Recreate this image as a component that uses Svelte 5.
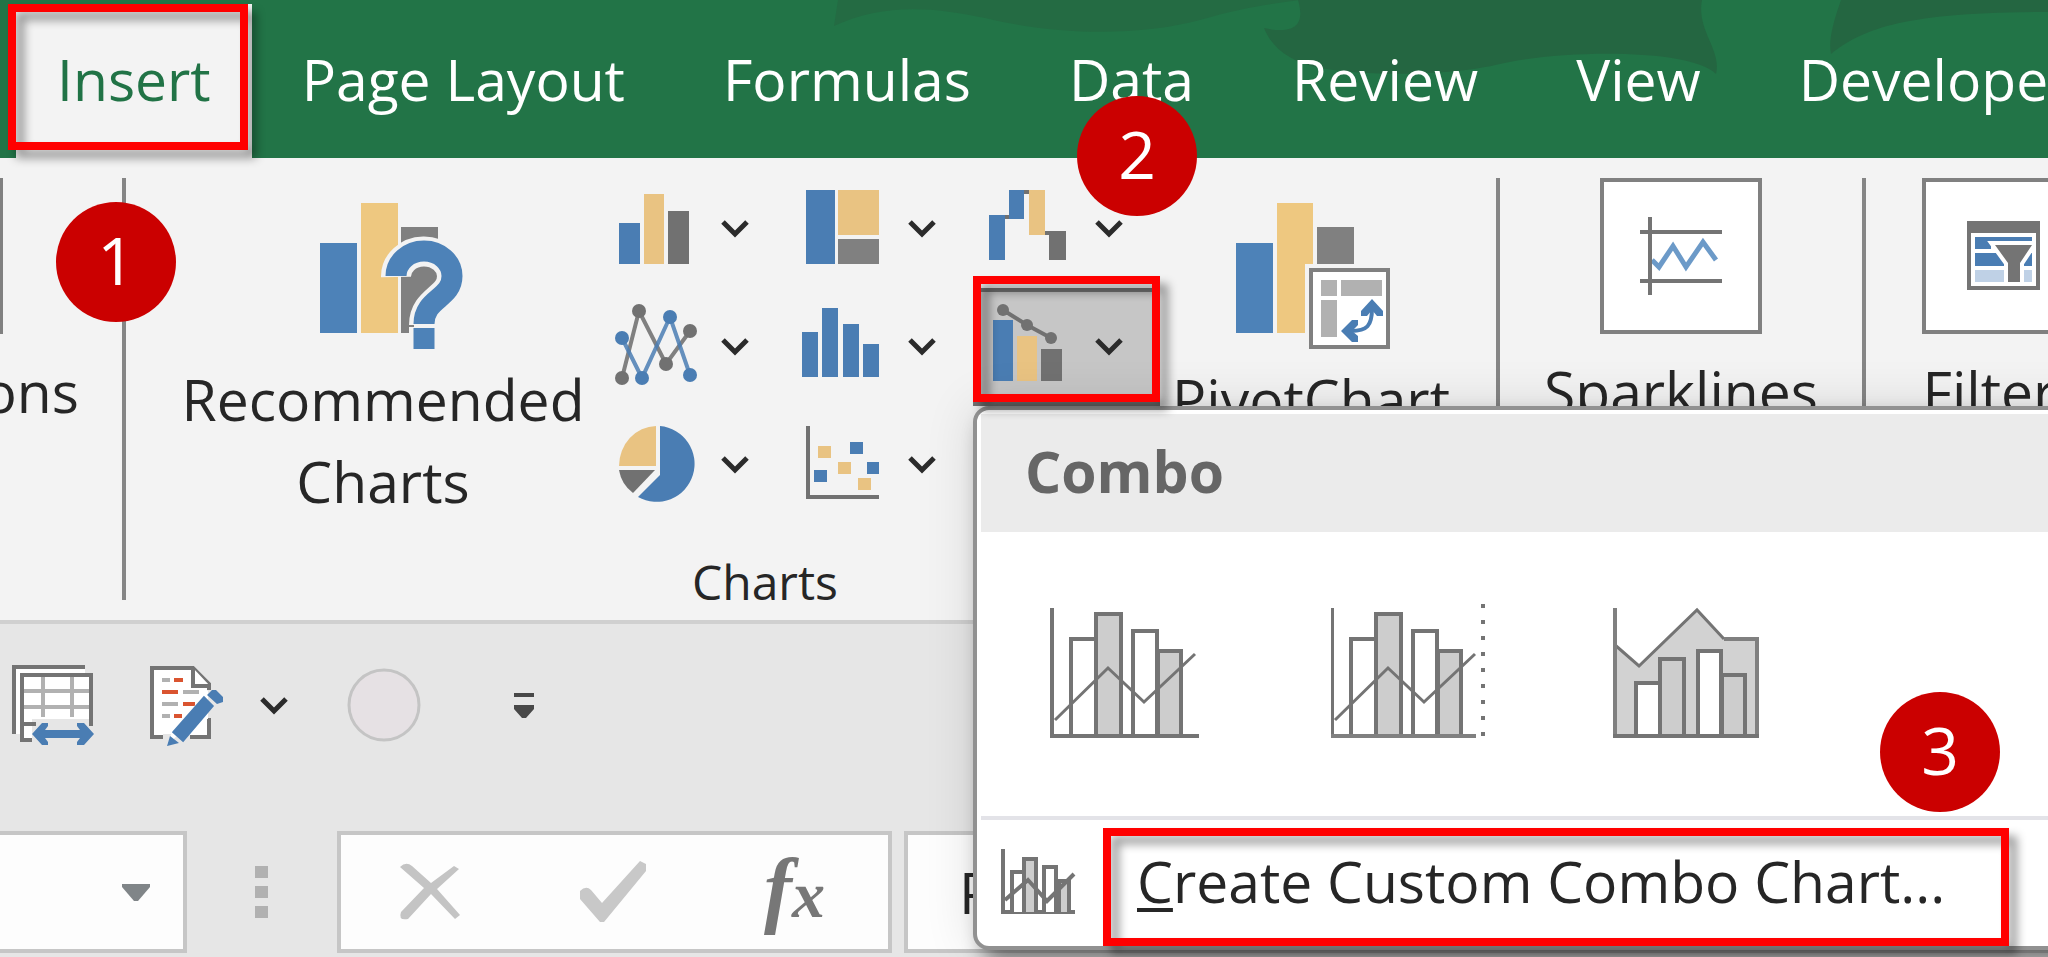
<script lang="ts">
  const tabs = ['Insert', 'Page Layout', 'Formulas', 'Data', 'Review', 'View', 'Developer'];
  const charts = ['column', 'treemap', 'waterfall', 'line', 'histogram', 'combo', 'pie', 'scatter'];

  let active = $state('Insert');
  let open = $state(true);
  let nameBox = $state('');
  let formula = $state('P');
</script>

{#snippet chevron()}
  <svg class="chevron" width="32" height="22" viewBox="0 0 32 22"><path d="M4 4L16 16L28 4" fill="none" stroke="#2b2b2b" stroke-width="5" /></svg>
{/snippet}

{#snippet clustered()}
  <g fill="#fff" stroke="#747474" stroke-width="4">
    <path d="M3 4V132" />
    <path d="M22 132V35H47V132M84 132V27H108V132" />
    <path d="M47 132V10H72V132M109 132V47H132V132" fill="#cdcdcd" />
    <path d="M6 116L59 64L95 98L146 50" fill="none" stroke-width="3" />
  </g>
{/snippet}

{#snippet icon(name: string)}
  <svg width="82" height="86" viewBox="0 0 82 86">
    {#if name === 'column'}
      <path d="M4 37h21v41H4z" fill="#4a7db3" /><path d="M29 8h20v70H29z" fill="#e9c382" /><path d="M53 25h21v53H53z" fill="#717171" />
    {:else if name === 'treemap'}
      <path d="M4 4h29v74H4z" fill="#4a7db3" /><path d="M36 4h41v45H36z" fill="#e9c382" /><path d="M36 53h41v25H36z" fill="#808080" />
    {:else if name === 'waterfall'}
      <path d="M16 29h6v4h-6zM35 4h6v4h-6zM56 45h5v4h-5zM60 45h17v29H60z" fill="#717171" />
      <path d="M0 29h16v45H0zM20 4h15v29H20z" fill="#4a7db3" /><path d="M40 4h16v45H40z" fill="#e9c382" />
    {:else if name === 'line'}
      <path d="M7 74L24 7L51 60L75 27" fill="none" stroke="#808080" stroke-width="4" />
      <path d="M7 34L27 74L55 13L75 71" fill="none" stroke="#4a7db3" stroke-width="4" stroke-opacity=".85" />
      {#each [[7, 74], [24, 7], [51, 60], [75, 27]] as [x, y]}<circle cx={x} cy={y} r="7" fill="#717171" />{/each}
      {#each [[7, 34], [27, 74], [55, 13], [75, 71]] as [x, y]}<circle cx={x} cy={y} r="7" fill="#4a7db3" />{/each}
    {:else if name === 'histogram'}
      <path d="M0 28h16v45H0zM20 4h16v69H20zM41 20h16v53H41zM61 40h16v33H61z" fill="#4a7db3" />
    {:else if name === 'combo'}
      <path d="M4 16h20v61H4z" fill="#4a7db3" /><path d="M28 32h20v45H28z" fill="#e9c382" /><path d="M52 45h21v32H52z" fill="#717171" />
      <path d="M14 6L38 21L62 34" fill="none" stroke="#717171" stroke-width="4" />
      {#each [[14, 6], [38, 21], [62, 34]] as [x, y]}<circle cx={x} cy={y} r="6" fill="#717171" />{/each}
    {:else if name === 'pie'}
      <path d="M45 4A38 38 0 1 1 23 75L45 53Z" fill="#4a7db3" />
      <path d="M41 4V44H4A38 40 0 0 1 41 4Z" fill="#e9c382" />
      <path d="M4 48H40L18 71A36 36 0 0 1 4 48Z" fill="#717171" />
    {:else}
      <path d="M6 4V75H77" fill="none" stroke="#717171" stroke-width="4" />
      <path d="M16 24h13v12H16zM36 40h13v12H36zM56 56h13v12H56z" fill="#e9c382" />
      <path d="M48 20h13v12H48zM65 40h12v12H65zM12 48h13v12H12z" fill="#4a7db3" />
    {/if}
  </svg>
{/snippet}

<div class="app">
  <header>
    <svg class="swirl" viewBox="0 0 2048 158" preserveAspectRatio="none" aria-hidden="true">
      <path d="M838 0L834 26C880 4 930 6 985 18C1060 36 1140 36 1200 20C1240 8 1270 4 1300 0Z" fill="#246b43" />
      <path d="M1298 0C1304 20 1300 36 1264 28C1272 48 1290 62 1320 68C1380 78 1460 74 1500 64C1560 50 1690 48 1716 74C1722 50 1696 30 1702 0Z" fill="#246641" />
      <path d="M1841 0C1834 20 1828 40 1831 54C1862 30 1900 12 2048 12V0Z" fill="#246641" />
    </svg>
    <nav>
      {#each tabs as tab}
        <button class="tab" class:active={active === tab} onclick={() => (active = tab)}>
          {tab}
          {#if tab === 'Insert'}<span class="mark mark-tab"></span>{/if}
        </button>
      {/each}
    </nav>
  </header>

  <section class="ribbon">
    <div class="group group-left">
      <button class="big"><span class="tile"></span>Illustrations</button>
    </div>
    <span class="sep"></span>
    <div class="group group-charts">
      <div class="tools">
        <button class="big recommended">
          <svg width="160" height="160" viewBox="0 0 160 160">
            <path d="M17 53h37v90H17z" fill="#4d82b8" /><path d="M58 13h37v130H58z" fill="#eec880" /><path d="M98 37h37v106H98z" fill="#808080" />
            <path d="M93 87A28 25 0 0 1 149 86C149 109 121 109 121 135M121 137V160" fill="none" stroke="#f3f3f3" stroke-width="30" />
            <path d="M111 134h26v10h-26z" fill="#f3f3f3" />
            <path d="M93 86A28 25 0 0 1 149 86C149 109 121 108 121 134M121 138V159" fill="none" stroke="#4d82b8" stroke-width="21" />
          </svg>
          Recommended<br />Charts
        </button>
        <div class="chart-grid">
          {#each charts as name}
            <div class="cell">
              <button class="chart" class:pressed={name === 'combo' && open} aria-label={name} onclick={() => { if (name === 'combo') open = !open; }}>
                {@render icon(name)}
                {@render chevron()}
              </button>
              {#if name === 'combo'}
                {#if open}
                  <div class="menu">
                    <h2>Combo</h2>
                    <div class="gallery">
                      <button aria-label="Clustered column and line">
                        <svg width="160" height="136" viewBox="0 0 160 136">{@render clustered()}<path d="M1 132H150" stroke="#747474" stroke-width="4" /></svg>
                      </button>
                      <button aria-label="Line on secondary axis">
                        <svg width="160" height="136" viewBox="2 0 160 136">
                          {@render clustered()}
                          <path d="M1 132H147" stroke="#808080" stroke-width="4" />
                          <path d="M154 0V136" stroke="#747474" stroke-width="4" stroke-dasharray="4 12" />
                        </svg>
                      </button>
                      <button aria-label="Stacked area and column">
                        <svg width="160" height="136" viewBox="0 0 160 136">
                          <path d="M2 41L26 62L84 6L111 35H144V132H2Z" fill="#d2d2d2" />
                          <path d="M2 41L26 62L84 6L111 35" fill="none" stroke="#747474" stroke-width="3" />
                          <path d="M2 4V132H144V35H111" fill="none" stroke="#808080" stroke-width="4" />
                          <g stroke="#747474" stroke-width="4">
                            <path d="M23 132V79H47V132M85 132V47H108V132" fill="#fff" />
                            <path d="M47 132V55H71V132M109 132V71H132V132" fill="#cdcdcd" />
                            <path d="M0 132H146" />
                          </g>
                        </svg>
                      </button>
                    </div>
                    <button class="custom">
                      <svg width="76" height="68" viewBox="0 0 76 68">
                        <g fill="#fff" stroke="#747474" stroke-width="4">
                          <path d="M2 0V63H74" fill="none" />
                          <path d="M11 63V23H23V63M43 63V18H55V63" />
                          <path d="M23 63V10H35V63M58 63V32H68V63" fill="#cdcdcd" />
                          <path d="M4 51L27 31L46 52L73 25" fill="none" />
                        </g>
                      </svg>
                      <span class="custom-label"><u>C</u>reate Custom Combo Chart...<span class="mark"></span></span>
                    </button>
                  </div>
                {/if}
                <span class="mark mark-combo"></span>
              {/if}
            </div>
          {/each}
        </div>
        <button class="big pivot">
          <svg width="160" height="160" viewBox="0 0 160 160">
            <path d="M5 53h37v90H5z" fill="#4d82b8" /><path d="M46 13h36v130H46z" fill="#eec880" /><path d="M86 37h37v37H86z" fill="#808080" />
            <path d="M74 74h86v86H74z" fill="#f3f3f3" />
            <path d="M80 80h77v77H80z" fill="#fff" stroke="#808080" stroke-width="4" />
            <path d="M90 90h16v16H90zM110 90h41v16h-41zM90 110h16v37H90z" fill="#b1b1b1" />
            <path d="M141 118C141 136 136 141 120 141" fill="none" stroke="#4a7db3" stroke-width="4" />
            <path d="M141 109L152 121V126H146L141 120L136 126H130V121ZM110 141L121 130H127V135L121 141L127 146V152H121Z" fill="#4a7db3" />
          </svg>
          PivotChart
        </button>
      </div>
      <div class="group-name">Charts</div>
    </div>
    <span class="sep"></span>
    <div class="group group-spark">
      <button class="big">
        <span class="tile">
          <svg width="82" height="78" viewBox="0 0 82 78">
            <path d="M12 43L19 50L33 29L46 50L63 25L76 43" fill="none" stroke="#6c9ac8" stroke-width="5" />
            <path d="M10 0V78M0 15H82M0 64H82" stroke="#747474" stroke-width="4" />
          </svg>
        </span>
        Sparklines
      </button>
    </div>
    <span class="sep"></span>
    <div class="group group-filter">
      <button class="big">
        <span class="tile">
          <svg width="73" height="70" viewBox="0 0 73 70">
            <path d="M0 0h73v69H0z" fill="#747474" /><path d="M4 12h65v53H4z" fill="#fff" />
            <path d="M8 16h57v4H8zM8 16h16v12H8zM8 32h57v13H8z" fill="#4a7db3" /><path d="M8 49h57v12H8z" fill="#bfd1e6" />
            <path d="M28 24H65L53 42V61H41V42Z" fill="#747474" stroke="#fff" stroke-width="8" paint-order="stroke" />
            <path d="M67 12v53" stroke="#fff" stroke-width="4" /><path d="M71 0v69" stroke="#747474" stroke-width="4" />
          </svg>
        </span>
        Filters
      </button>
    </div>
  </section>

  <div class="quick">
    <button aria-label="Column width">
      <svg width="82" height="82" viewBox="0 0 82 82">
        <path d="M2 69V2H73V8H8V69Z" fill="#fff" /><path d="M2 69V2H73" fill="none" stroke="#747474" stroke-width="4" />
        <path d="M10 10H79V75H10Z" fill="#fff" />
        <path d="M31 10V52M60 10V52M10 26H79M10 42H79" stroke="#b1b1b1" stroke-width="4" />
        <path d="M20 54H82V82H20Z" fill="#e6e6e6" />
        <path d="M79 61V10H10V75H20M10 59H24" fill="none" stroke="#747474" stroke-width="4" />
        <path d="M20 69L30 58H36V61L33 65H68L65 61V58H72L82 69L72 80H65V77L68 73H33L36 77V80H30Z" fill="#4a7db3" />
      </svg>
    </button>
    <div class="split">
      <button aria-label="Edit document">
        <svg width="76" height="80" viewBox="0 0 76 80">
          <path d="M2 2H43L59 18V71H2Z" fill="#fff" stroke="#747474" stroke-width="4" />
          <path d="M43 2V20H60" fill="#fff" stroke="#747474" stroke-width="4" />
          <path d="M12 12h8v4h-8zM33 24h16v4H33zM12 36h16v4H12zM12 48h8v4h-8z" fill="#b1b1b1" />
          <path d="M24 12h9v4h-9zM12 24h16v4H12zM33 36h12v4H33zM24 48h8v4h-8z" fill="#da5430" />
          <path d="M57 24H64V52H57Z" fill="#e6e6e6" />
          <path d="M13 68H40V80H13Z" fill="#e6e6e6" />
          <path d="M17 79L22 66L58 24V58L42 69H28Z" fill="#fff" />
          <path d="M17 80L20 70L29 77ZM24 66L54 32L62 40L33 74ZM57 29L62 24H66L73 31V36L67 38Z" fill="#4a7db3" />
          <path d="M24 66L54 32L62 40L33 74Z" fill="#4a7db3" stroke="#4a7db3" stroke-width="3" />
          <path d="M59 53V71H42" fill="none" stroke="#747474" stroke-width="4" />
        </svg>
      </button>
      <button aria-label="Edit options">{@render chevron()}</button>
    </div>
    <button aria-label="Record">
      <svg width="76" height="76" viewBox="0 0 76 76"><circle cx="38" cy="37" r="35" fill="#e6e1e4" stroke="#c4c4c4" stroke-width="3" /></svg>
    </button>
    <button class="customize" aria-label="Customize toolbar">
      <svg width="20" height="26" viewBox="0 0 20 26"><path d="M0 0h20v4H0zM0 12H20V16L12 25H8L0 16Z" fill="#484848" /></svg>
    </button>
  </div>

  <div class="formula-bar">
    <div class="name-box">
      <input aria-label="Name box" bind:value={nameBox} />
      <button aria-label="Named ranges"><svg width="28" height="17" viewBox="0 0 28 17"><path d="M0 0H28V3L16 17H12L0 3Z" fill="#808588" /></svg></button>
    </div>
    <div class="dots"><i></i><i></i><i></i></div>
    <div class="actions">
      <button aria-label="Cancel">
        <svg width="64" height="62" viewBox="0 0 64 62"><path d="M2 6Q8 0 14 5L33 22L56 5L61 8L39 28L62 54L57 58L33 33L10 58Q0 60 3 51L26 27Z" fill="#c4c4c4" /></svg>
      </button>
      <button aria-label="Enter">
        <svg width="70" height="62" viewBox="0 0 70 62"><path d="M2 30Q8 24 13 29L24 42L62 0L68 3V10L26 61H22L2 38Z" fill="#c8c8c8" /></svg>
      </button>
      <button class="fx" aria-label="Insert function"><span>f</span><small>x</small></button>
    </div>
    <input class="formula" aria-label="Formula bar" bind:value={formula} />
  </div>

  <span class="badge one">1</span>
  <span class="badge two">2</span>
  <span class="badge three">3</span>
</div>

<style>
  :global(body) { background: #e6e6e6; }
  .app { position: relative; min-height: 100vh; overflow: hidden; background: #e6e6e6; color: #262626; font-family: "Open Sans", "Noto Sans", sans-serif; font-size: 57px; line-height: 82px; }
  button, input { font: inherit; color: inherit; border: none; background: none; padding: 0; margin: 0; }
  button { cursor: pointer; }
  svg { display: block; flex-shrink: 0; }

  header { position: relative; background: #227447; }
  .swirl { position: absolute; inset: 0; width: 100%; height: 100%; }
  nav { display: flex; gap: 2px; padding: 4px 0 0 16px; }
  .tab { position: relative; flex-shrink: 0; padding: 34px 48px 38px; color: #fff; white-space: nowrap; }
  .tab.active { padding: 34px 41px 38px; background: #f3f3f3; color: #217346; }

  .mark { position: absolute; z-index: 3; border: 8px solid #f00; filter: drop-shadow(8px 8px 5px rgba(0, 0, 0, .4)); pointer-events: none; }
  .mark-tab { inset: 0 4px 8px -8px; }
  .mark-combo { inset: -12px 0 4px; }

  .ribbon { display: flex; padding-top: 20px; background: #f3f3f3; border-bottom: 4px solid #d0d0d0; }
  .sep { width: 4px; flex-shrink: 0; margin-bottom: 20px; background: #858585; }
  .group { display: flex; flex-shrink: 0; box-sizing: border-box; align-items: flex-start; }
  .group-left { width: 122px; padding-right: 43px; justify-content: flex-end; }
  .group-charts { flex-direction: column; align-items: stretch; width: 1370px; padding: 0 0 8px 40px; }
  .group-spark { width: 362px; justify-content: center; }
  .group-filter { padding-left: 56px; }
  .big { display: flex; flex-direction: column; flex-shrink: 0; align-items: center; text-align: center; white-space: nowrap; }
  .big svg { margin-bottom: 8px; }
  .tile { display: flex; align-items: center; justify-content: center; box-sizing: border-box; width: 162px; height: 156px; margin-bottom: 16px; background: #fff; border: 4px solid #808080; }
  .tile svg { margin: 0; }
  .tools { display: flex; align-items: flex-start; margin-top: -8px; }
  .recommended { width: 434px; padding-top: 20px; }
  .pivot { width: 302px; padding-top: 20px; }
  .group-name { margin-top: 28px; padding-right: 132px; font-size: 48px; line-height: 60px; text-align: center; }

  .chart-grid { display: grid; grid-template-columns: repeat(3, 187px); grid-auto-rows: 118px; margin-left: -1px; }
  .cell { position: relative; }
  .chart { display: flex; align-items: center; gap: 22px; box-sizing: border-box; width: 100%; height: 100%; padding-left: 16px; }
  .chart.pressed { background: #c6c6c6; box-shadow: inset 0 4px #747474, inset 0 -4px #747474; }

  .menu { position: absolute; z-index: 2; top: 100%; left: 0; width: 1200px; box-sizing: border-box; padding: 4px 4px 0; background: #fff; border: 4px solid #919191; border-radius: 16px; box-shadow: 10px 12px 20px rgba(0, 0, 0, .45), 0 0 50px rgba(0, 0, 0, .12); }
  h2 { margin: 0; padding: 16px 44px 20px; background: #ebebeb; color: #666; font-size: 57px; font-weight: 700; }
  .gallery { display: flex; gap: 122px; padding: 72px 68px 76px; border-bottom: 4px solid #e3e3e8; }
  .custom { display: flex; align-items: center; gap: 26px; padding-left: 20px; white-space: nowrap; }
  .custom-label { position: relative; padding: 20px 64px 24px 34px; }
  .custom-label .mark { inset: 8px 0 0; }
  u { text-decoration-thickness: 4px; text-underline-offset: 5px; text-decoration-skip-ink: none; }

  .quick { display: flex; gap: 56px; align-items: center; padding: 41px 12px 84px; }
  .split { display: flex; align-items: center; gap: 32px; }
  .customize { margin-left: 36px; }

  .formula-bar { display: flex; align-items: stretch; height: 122px; margin-bottom: 4px; }
  .name-box, .actions, .formula { box-sizing: border-box; background: #fdfdfd; border: 4px solid #c6c6c6; }
  .name-box { display: flex; align-items: center; width: 187px; padding-right: 33px; border-left: none; }
  .name-box input { width: 100%; min-width: 0; flex: 1; }
  .dots { display: flex; flex-direction: column; justify-content: center; gap: 8px; padding: 0 69px 0 68px; }
  .dots i { width: 13px; height: 12px; background: #b1b1b1; }
  .actions { display: flex; align-items: center; gap: 116px; width: 555px; margin-right: 12px; padding-left: 57px; }
  .fx { display: flex; align-items: baseline; color: #777; font-family: "Liberation Serif", serif; font-style: italic; font-weight: 700; font-size: 84px; }
  .fx small { font-size: 66px; }
  .formula { flex: 1; min-width: 0; padding-left: 51px; }

  .badge { position: absolute; z-index: 4; display: flex; align-items: center; justify-content: center; box-sizing: border-box; width: 120px; height: 120px; padding-bottom: 6px; border-radius: 50%; background: #cb0000; color: #fff; font-size: 66px; font-weight: 500; }
  .one { left: 56px; top: 202px; }
  .two { left: 1077px; top: 96px; }
  .three { left: 1880px; top: 692px; }
</style>
